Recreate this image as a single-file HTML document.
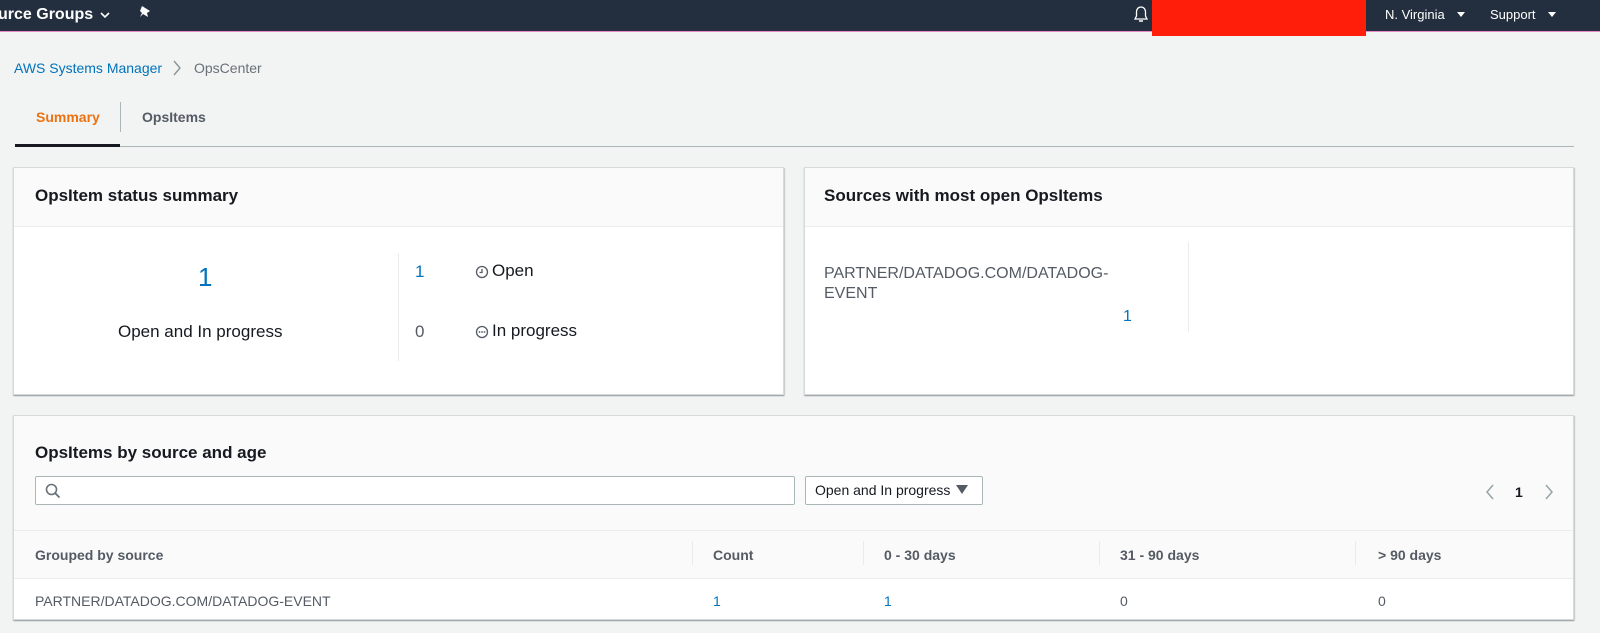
<!DOCTYPE html>
<html><head><meta charset="utf-8"><style>
*{box-sizing:border-box;margin:0;padding:0}
body{width:1600px;height:633px;background:#f2f3f3;font-family:"Liberation Sans",Arial,sans-serif;color:#16191f;position:relative;overflow:hidden}
.a{position:absolute;white-space:nowrap}
.top{position:absolute;left:0;top:0;width:1600px;height:32px;background:#232f3e;border-bottom:1px solid #e889c9}
.card{position:absolute;background:#fff;border:1px solid #d5dbdb;box-shadow:0 1px 1px rgba(0,28,36,.3),1px 1px 1px rgba(0,28,36,.15)}
.hd{position:absolute;left:0;right:0;top:0;background:#fafafa;border-bottom:1px solid #eaeded}
.h2{font-size:17px;font-weight:bold}
.th{font-size:14px;font-weight:bold;color:#545b64}
.td{font-size:14px;color:#16191f}
.blue{color:#0073bb !important}
</style></head><body>
<div class="top"></div>
<div class="a" style="left:-2px;top:6px;color:#fff;font-size:16px;font-weight:bold">urce Groups</div>
<svg class="a" style="left:100px;top:11px" width="10" height="8"><path d="M1 2l4 4 4-4" stroke="#fff" stroke-width="1.6" fill="none"/></svg>
<svg class="a" style="left:138px;top:5px" width="14" height="16"><path d="M4 1l8 5-3 2 1 4-5-3-3 3 2-4-2-2z" fill="#fff"/></svg>
<svg class="a" style="left:1133px;top:5px" width="16" height="20"><path d="M8 2c-3 0-4.5 2.5-4.5 5v4L2 14h12l-1.5-3V7C12.5 4.5 11 2 8 2z" stroke="#fff" stroke-width="1.3" fill="none"/><path d="M6 16h4" stroke="#fff" stroke-width="1.5"/></svg>
<div class="a" style="left:1152px;top:0;width:214px;height:36px;background:#ff1e0a"></div>
<div class="a" style="left:1385px;top:7px;color:#fff;font-size:13px">N. Virginia</div>
<svg class="a" style="left:1457px;top:12px" width="8" height="6"><path d="M0 0h8L4 5z" fill="#fff"/></svg>
<div class="a" style="left:1490px;top:7px;color:#fff;font-size:13px">Support</div>
<svg class="a" style="left:1548px;top:12px" width="8" height="6"><path d="M0 0h8L4 5z" fill="#fff"/></svg>

<div class="a blue" style="left:14px;top:60px;font-size:14px">AWS Systems Manager</div>
<svg class="a" style="left:172px;top:60px" width="10" height="16"><path d="M2 1l6 7-6 7" stroke="#879596" stroke-width="1.4" fill="none"/></svg>
<div class="a" style="left:194px;top:60px;font-size:14px;color:#687078">OpsCenter</div>

<div class="a" style="left:36px;top:109px;font-size:14px;font-weight:bold;color:#ec7211">Summary</div>
<div class="a" style="left:120px;top:102px;width:1px;height:30px;background:#aab7b8"></div>
<div class="a" style="left:142px;top:109px;font-size:14px;font-weight:bold;color:#545b64">OpsItems</div>
<div class="a" style="left:15px;top:146px;width:1559px;height:1px;background:#aab7b8"></div>
<div class="a" style="left:15px;top:144px;width:105px;height:3px;background:#16191f"></div>

<div class="card" style="left:13px;top:167px;width:771px;height:228px">
 <div class="hd" style="height:59px"></div>
 <div class="a h2" style="left:21px;top:18px">OpsItem status summary</div>
 <div class="a blue" style="left:184px;top:94px;font-size:26px">1</div>
 <div class="a" style="left:104px;top:154px;font-size:17px">Open and In progress</div>
 <div class="a" style="left:384px;top:85px;width:1px;height:108px;background:#eaeded"></div>
 <div class="a blue" style="left:401px;top:94px;font-size:17px">1</div>
 <svg class="a" style="left:461px;top:97px" width="14" height="14"><circle cx="7" cy="7" r="5.5" stroke="#545b64" stroke-width="1.3" fill="none"/><path d="M7 4v3.5H4.5" stroke="#545b64" stroke-width="1.3" fill="none"/></svg>
 <div class="a" style="left:478px;top:93px;font-size:17px;color:#16191f">Open</div>
 <div class="a" style="left:401px;top:154px;font-size:17px;color:#545b64">0</div>
 <svg class="a" style="left:461px;top:157px" width="14" height="14"><circle cx="7" cy="7" r="5.5" stroke="#545b64" stroke-width="1.3" fill="none"/><circle cx="4.5" cy="7" r=".9" fill="#545b64"/><circle cx="7" cy="7" r=".9" fill="#545b64"/><circle cx="9.5" cy="7" r=".9" fill="#545b64"/></svg>
 <div class="a" style="left:478px;top:153px;font-size:17px">In progress</div>
</div>

<div class="card" style="left:804px;top:167px;width:770px;height:228px">
 <div class="hd" style="height:59px"></div>
 <div class="a h2" style="left:19px;top:18px">Sources with most open OpsItems</div>
 <div class="a" style="left:19px;top:96px;font-size:16px;color:#545b64;line-height:20px">PARTNER/DATADOG.COM/DATADOG-<br>EVENT</div>
 <div class="a blue" style="left:318px;top:140px;font-size:16px">1</div>
 <div class="a" style="left:383px;top:74px;width:1px;height:90px;background:#eaeded"></div>
</div>

<div class="card" style="left:13px;top:415px;width:1561px;height:205px">
 <div class="hd" style="height:115px"></div>
 <div class="a h2" style="left:21px;top:27px">OpsItems by source and age</div>
 <div class="a" style="left:21px;top:60px;width:760px;height:29px;background:#fff;border:1px solid #aab7b8;border-radius:2px"></div>
 <svg class="a" style="left:31px;top:67px" width="16" height="16"><circle cx="6.5" cy="6.5" r="5" stroke="#687078" stroke-width="1.6" fill="none"/><path d="M10 10l4.5 4.5" stroke="#687078" stroke-width="1.8"/></svg>
 <div class="a" style="left:791px;top:60px;width:178px;height:29px;background:#fff;border:1px solid #aab7b8;border-radius:2px"></div>
 <div class="a" style="left:801px;top:66px;font-size:14px">Open and In progress</div>
 <svg class="a" style="left:942px;top:69px" width="12" height="10"><path d="M0 0h12L6 9z" fill="#545b64"/></svg>
 <svg class="a" style="left:1471px;top:68px" width="10" height="16"><path d="M8 1L2 8l6 7" stroke="#95a5a6" stroke-width="1.5" fill="none"/></svg>
 <div class="a" style="left:1501px;top:68px;font-size:14px;font-weight:bold">1</div>
 <svg class="a" style="left:1530px;top:68px" width="10" height="16"><path d="M2 1l6 7-6 7" stroke="#95a5a6" stroke-width="1.5" fill="none"/></svg>
 <div class="a" style="left:0;right:0;top:114px;height:49px;background:#fafafa;border-bottom:1px solid #eaeded;border-top:1px solid #eaeded"></div>
 <div class="a th" style="left:21px;top:131px">Grouped by source</div>
 <div class="a" style="left:678px;top:125px;width:1px;height:24px;background:#eaeded"></div>
 <div class="a th" style="left:699px;top:131px">Count</div>
 <div class="a" style="left:849px;top:125px;width:1px;height:24px;background:#eaeded"></div>
 <div class="a th" style="left:870px;top:131px">0 - 30 days</div>
 <div class="a" style="left:1085px;top:125px;width:1px;height:24px;background:#eaeded"></div>
 <div class="a th" style="left:1106px;top:131px">31 - 90 days</div>
 <div class="a" style="left:1341px;top:125px;width:1px;height:24px;background:#eaeded"></div>
 <div class="a th" style="left:1364px;top:131px">&gt; 90 days</div>
 <div class="a td" style="left:21px;top:177px;color:#545b64">PARTNER/DATADOG.COM/DATADOG-EVENT</div>
 <div class="a td blue" style="left:699px;top:177px">1</div>
 <div class="a td blue" style="left:870px;top:177px">1</div>
 <div class="a td" style="left:1106px;top:177px;color:#545b64">0</div>
 <div class="a td" style="left:1364px;top:177px;color:#545b64">0</div>
</div>
</body></html>
